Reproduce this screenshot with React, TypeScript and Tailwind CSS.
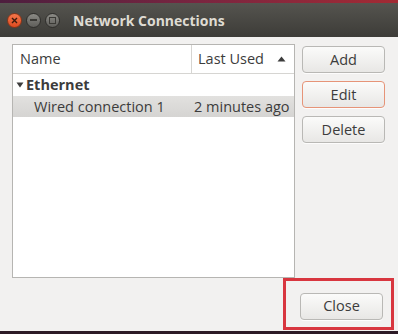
const font = { fontFamily: '"Open Sans", "Noto Sans", sans-serif' };

function WindowButtons() {
  return (
    <div className="flex items-center gap-[4px] pl-[7px]">
      <div className="w-[15px] h-[15px] rounded-full bg-gradient-to-b from-[#f4764a] to-[#df4b1f] border border-[#8a3518] flex items-center justify-center">
        <svg width="7" height="7" viewBox="0 0 7 7">
          <path d="M1 1 L6 6 M6 1 L1 6" stroke="#3c1a0c" strokeWidth="1.4" />
        </svg>
      </div>
      <div className="w-[15px] h-[15px] rounded-full bg-gradient-to-b from-[#8b8a85] to-[#5f5e5a] border border-[#2f2e2b] flex items-center justify-center">
        <div className="w-[7px] h-[1.5px] bg-[#3a3935]" />
      </div>
      <div className="w-[15px] h-[15px] rounded-full bg-gradient-to-b from-[#8b8a85] to-[#5f5e5a] border border-[#2f2e2b] flex items-center justify-center">
        <div className="w-[7px] h-[7px] border border-[#3a3935]" />
      </div>
    </div>
  );
}

function Btn({ label, focus }: { label: string; focus?: boolean }) {
  return (
    <button
      className={
        "w-[83px] h-[27px] rounded-[4px] border bg-gradient-to-b from-[#fbfbfa] to-[#e8e7e5] text-[14.5px] text-[#3c3c3c] shadow-[0_1px_0_rgba(255,255,255,0.8)] " +
        (focus ? "border-[#e69478]" : "border-[#b9b8b5]")
      }
    >
      {label}
    </button>
  );
}

export default function App() {
  return (
    <div className="w-[398px] h-[334px] flex flex-col bg-[#f2f1f0] overflow-hidden" style={font}>
      <div className="h-[3px] bg-gradient-to-r from-[#4d1e3e] via-[#7a2540] to-[#a32a33]" />
      <div className="h-[34px] bg-gradient-to-b from-[#55544f] to-[#3d3c38] flex items-center">
        <WindowButtons />
        <span className="ml-[13px] text-[14px] font-bold text-[#dfdbd2]">
          Network Connections
        </span>
      </div>
      <div className="flex-1 flex flex-col">
        <div className="flex pt-[7px] pl-[12px]">
          <div className="w-[283px] h-[234px] border border-[#b6b5b2] bg-white flex flex-col">
            <div className="h-[29px] flex border-b border-[#d6d5d2] text-[14.5px] text-[#3c3c3c]">
              <div className="w-[179px] border-r border-[#d6d5d2] flex items-center pl-[7px]">Name</div>
              <div className="flex-1 flex items-center pl-[6px]">
                Last Used
                <svg className="ml-[13px]" width="9" height="6" viewBox="0 0 9 6">
                  <path d="M0.5 5.5 L4.5 0.5 L8.5 5.5 Z" fill="#3c3c3c" />
                </svg>
              </div>
            </div>
            <div className="h-[21px] flex items-center pl-[3px] text-[14.5px] font-bold text-[#3c3c3c]">
              <svg width="8" height="6" viewBox="0 0 8 6">
                <path d="M0.5 0.5 L7.5 0.5 L4 5.5 Z" fill="#3c3c3c" />
              </svg>
              <span className="ml-[2px]">Ethernet</span>
            </div>
            <div className="h-[21px] mt-[1px] flex items-center bg-gradient-to-b from-[#e2e1df] to-[#d5d4d2] text-[14.5px] text-[#3c3c3c]">
              <span className="w-[181px] pl-[21px]">Wired connection 1</span>
              <span>2 minutes ago</span>
            </div>
          </div>
          <div className="ml-[7px] pt-[2px] flex flex-col gap-[8px]">
            <Btn label="Add" />
            <Btn label="Edit" focus />
            <Btn label="Delete" />
          </div>
        </div>
        <div className="flex-1 flex justify-end pr-[4px]">
          <div className="w-[111px] h-[52px] border-[3px] border-[#d8363f] flex items-center justify-center pl-[6px] pt-[4px]">
            <Btn label="Close" />
          </div>
        </div>
      </div>
      <div className="h-[3px] bg-[#2c1a26]" />
    </div>
  );
}
